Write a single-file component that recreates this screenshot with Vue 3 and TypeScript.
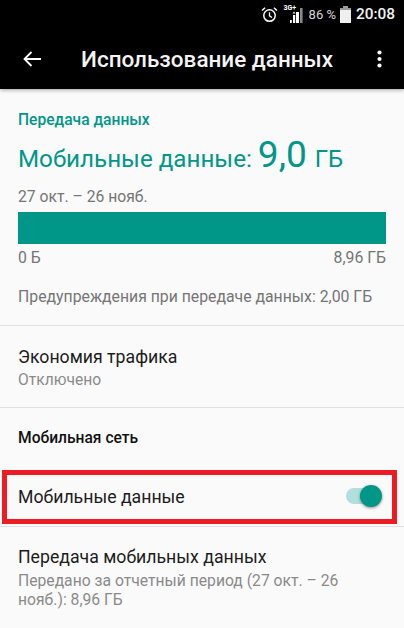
<script setup lang="ts">
const title: string = 'Использование данных'
</script>

<template>
  <div class="screen">
    <header class="appbar">
      <div class="status">
        <svg class="alarm" width="17" height="17" viewBox="0 0 16 16" fill="none" stroke="#fff">
          <circle cx="8" cy="9" r="5.4" stroke-width="1.4" />
          <path d="M8 5.8V9.3L10.4 10.8" stroke-width="1.2" />
          <path d="M1 4.2 3.8 1.6M15 4.2 12.2 1.6" stroke-width="1.4" />
        </svg>
        <div class="signal">
          <span class="net">3G+</span>
          <svg width="18" height="16" viewBox="0 0 18 16">
            <path d="M6.500 6.500 8 4.500 9.500 6.500Z" fill="#fff" />
            <rect x="4" y="13" width="1.800" height="3" fill="#fff" />
            <rect x="7" y="8" width="2.200" height="8" fill="#fff" />
            <rect x="10" y="5" width="3" height="11" fill="#fff" />
            <rect x="14" y="1" width="2.600" height="15" fill="#8a8a8a" />
          </svg>
        </div>
        <span class="pct">86 %</span>
        <svg class="batt" width="11" height="17" viewBox="0 0 11 17">
          <rect x="3" y="0" width="5" height="2" fill="#9a9a9a" />
          <rect x="0" y="2" width="11" height="2" fill="#9a9a9a" />
          <rect x="0" y="4" width="11" height="13" fill="#f0f0f0" />
        </svg>
        <span class="clock">20:08</span>
      </div>
      <div class="toolbar">
        <svg class="back" width="18" height="16" viewBox="0 0 18 16" fill="none" stroke="#fff" stroke-width="1.800">
          <path d="M18 8H1.500M8.500 1 1.500 8 8.500 15" />
        </svg>
        <span class="title">{{ title }}</span>
        <svg class="more" width="5" height="18" viewBox="0 0 5 18" fill="#fff">
          <circle cx="2.500" cy="2.500" r="2.100" />
          <circle cx="2.500" cy="9" r="2.100" />
          <circle cx="2.500" cy="15.500" r="2.100" />
        </svg>
      </div>
    </header>

    <main class="content">
      <section class="usage">
        <h2 class="section-teal">Передача данных</h2>
        <div class="total">
          <span class="total-label">Мобильные данные:</span>
          <span class="total-num">9,0</span>
          <span class="total-unit">ГБ</span>
        </div>
        <div class="period">27 окт. – 26 нояб.</div>
        <div class="bar"></div>
        <div class="scale"><span>0 Б</span><span>8,96 ГБ</span></div>
        <div class="warn">Предупреждения при передаче данных: 2,00 ГБ</div>
      </section>

      <section class="pref saver">
        <div class="pref-title">Экономия трафика</div>
        <div class="pref-sub">Отключено</div>
      </section>

      <section class="category">
        <h2 class="section-dark">Мобильная сеть</h2>
        <div class="highlight">
          <span class="pref-title">Мобильные данные</span>
          <span class="switch"><span class="track"></span><span class="thumb"></span></span>
        </div>
      </section>

      <section class="pref transfer">
        <div class="pref-title">Передача мобильных данных</div>
        <div class="pref-sub">Передано за отчетный период (27 окт. – 26<br />нояб.): 8,96 ГБ</div>
      </section>
    </main>
  </div>
</template>

<style>
html, body { margin: 0; background: #fafafa; }
</style>

<style scoped>
.screen {
  width: 404px;
  height: 628px;
  overflow: hidden;
  background: #fafafa;
  font-family: Roboto, "Noto Sans", sans-serif;
  display: flex;
  flex-direction: column;
}
.appbar {
  height: 89px;
  flex: none;
  background: #000;
  color: #fff;
  box-shadow: 0 1px 4px rgba(0, 0, 0, 0.35);
  position: relative;
}
.status {
  height: 28px;
  display: flex;
  align-items: center;
  justify-content: flex-end;
  padding-right: 9px;
}
.alarm { margin-right: 7px; }
.signal { position: relative; width: 19px; height: 18px; margin-right: 5px; }
.signal svg { position: absolute; left: 1px; bottom: 0; }
.net {
  position: absolute;
  left: -1px;
  top: 0;
  font-size: 7px;
  font-weight: 700;
  line-height: 7px;
}
.pct { font-size: 13px; color: #d8d8d8; margin-right: 4px; }
.batt { margin-right: 5px; }
.clock { font-size: 15.4px; font-weight: 500; color: #f2f2f2; }
.toolbar {
  height: 61px;
  display: flex;
  align-items: center;
  padding: 0 22px 0 23px;
}
.back { flex: none; }
.title {
  margin-left: 40px;
  flex: 1;
  font-size: 22.5px;
  font-weight: 500;
  color: #f4f4f4;
  white-space: nowrap;
}
.more { flex: none; }

.content { flex: 1; }
.usage { padding: 21px 18px 0; height: 237px; box-sizing: border-box; border-bottom: 1px solid #e0e0e0; }
.section-teal, .section-dark {
  margin: 0;
  font-size: 15.6px;
  font-weight: 500;
  line-height: 20px;
}
.section-teal { color: #009688; }
.section-dark { color: #111; }
.total {
  margin-top: 3px;
  height: 46px;
  display: flex;
  align-items: baseline;
  color: #009688;
  white-space: nowrap;
}
.total-label { font-size: 24.2px; }
.total-unit { font-size: 24px; }
.total-num { font-size: 37px; margin: 0 8px 0 6px; }
.period { margin-top: 9px; font-size: 15.7px; line-height: 18px; color: #757575; }
.bar { margin-top: 6px; height: 32px; background: #009688; }
.scale {
  margin-top: 5px;
  display: flex;
  justify-content: space-between;
  font-size: 15.8px;
  line-height: 18px;
  color: #757575;
}
.warn { margin-top: 21px; font-size: 15.8px; line-height: 18px; color: #757575; }

.pref { padding: 0 18px; box-sizing: border-box; border-bottom: 1px solid #e0e0e0; }
.saver { height: 82px; padding-top: 20px; }
.pref-title { font-size: 17.7px; line-height: 22px; color: #1c1c1c; }
.pref-sub { font-size: 15.6px; line-height: 19px; color: #8a8a8a; }
.saver .pref-sub { margin-top: 3px; }

.category { padding-top: 20px; }
.section-dark { padding-left: 18px; }
.highlight {
  margin: 22px 7px 0 2px;
  height: 54px;
  box-sizing: border-box;
  border: 5px solid #ed1c24;
  padding: 0 10px 0 11px;
  display: flex;
  align-items: center;
  justify-content: space-between;
}
.switch { position: relative; width: 36px; height: 22px; flex: none; margin-bottom: 2px; }
.track {
  position: absolute;
  left: 0;
  top: 3px;
  width: 30px;
  height: 16px;
  border-radius: 8px;
  background: #b2dfdb;
}
.thumb {
  position: absolute;
  right: 0;
  top: 0;
  width: 22px;
  height: 22px;
  border-radius: 50%;
  background: #009688;
  box-shadow: 0 1px 3px rgba(0, 0, 0, 0.45);
}
.transfer {
  height: 103px;
  margin-top: 2px;
  border-top: 1px solid #e0e0e0;
  padding-top: 19px;
}
.transfer .pref-sub { margin-top: 3px; font-size: 15.7px; }
</style>
